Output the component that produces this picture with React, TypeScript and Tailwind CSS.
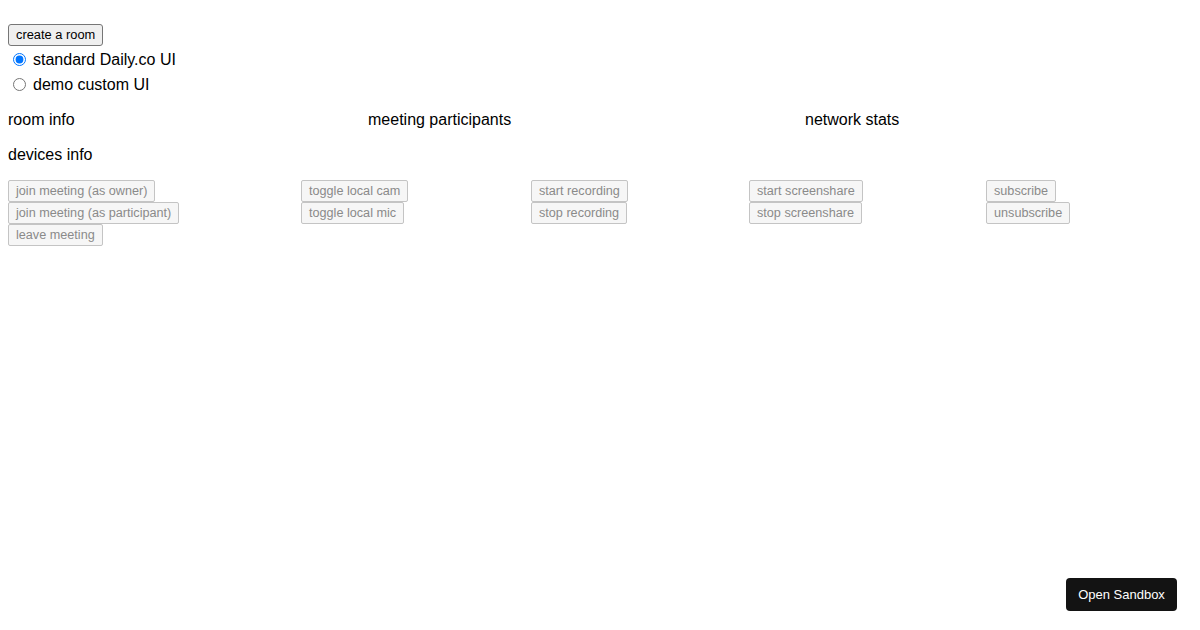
import React from "react";

const font = { fontFamily: '"Liberation Sans", Arial, sans-serif' } as const;

const columns: string[][] = [
  ["join meeting (as owner)", "join meeting (as participant)", "leave meeting"],
  ["toggle local cam", "toggle local mic"],
  ["start recording", "stop recording"],
  ["start screenshare", "stop screenshare"],
  ["subscribe", "unsubscribe"],
];

const colWidths = ["w-[293px]", "w-[230px]", "w-[218px]", "w-[237px]", "flex-1"];

function DisabledButton({ label }: { label: string }) {
  return (
    <button
      disabled
      className="block h-[22px] rounded-[2px] border border-[#c4c4c4] bg-[#f6f6f6] px-[7px] text-[12.65px] leading-[20px] text-[#8a8a8a]"
    >
      {label}
    </button>
  );
}

export default function App() {
  return (
    <div className="min-h-[630px] bg-white px-2 pt-6 text-[16px] text-black" style={font}>
      {/* Room controls */}
      <button className="block h-[22px] rounded-[3px] border border-[#767676] bg-[#efefef] px-[7px] text-[12.85px] leading-[20px] text-black">
        create a room
      </button>
      <label className="mt-[1px] flex h-[25px] items-center">
        <input type="radio" name="ui" defaultChecked className="ml-[5px] mr-[7px] h-[13px] w-[13px]" />
        <span>standard Daily.co UI</span>
      </label>
      <label className="flex h-[25px] items-center">
        <input type="radio" name="ui" className="ml-[5px] mr-[7px] h-[13px] w-[13px]" />
        <span>demo custom UI</span>
      </label>

      {/* Info sections */}
      <div className="mt-[14px] flex h-[18px] leading-[18px]">
        <div className="w-[360px]">room info</div>
        <div className="w-[437px]">meeting participants</div>
        <div>network stats</div>
      </div>
      <div className="mt-[17px] h-[18px] leading-[18px]">devices info</div>

      {/* Meeting actions */}
      <div className="mt-[16px] flex">
        {columns.map((col, i) => (
          <div key={i} className={`${colWidths[i]} flex flex-col items-start`}>
            {col.map((label) => (
              <DisabledButton key={label} label={label} />
            ))}
          </div>
        ))}
      </div>

      <button className="fixed bottom-[19px] right-[23px] h-[33px] w-[111px] rounded-[4px] bg-[#131313] text-[13px] text-white">
        Open Sandbox
      </button>
    </div>
  );
}
